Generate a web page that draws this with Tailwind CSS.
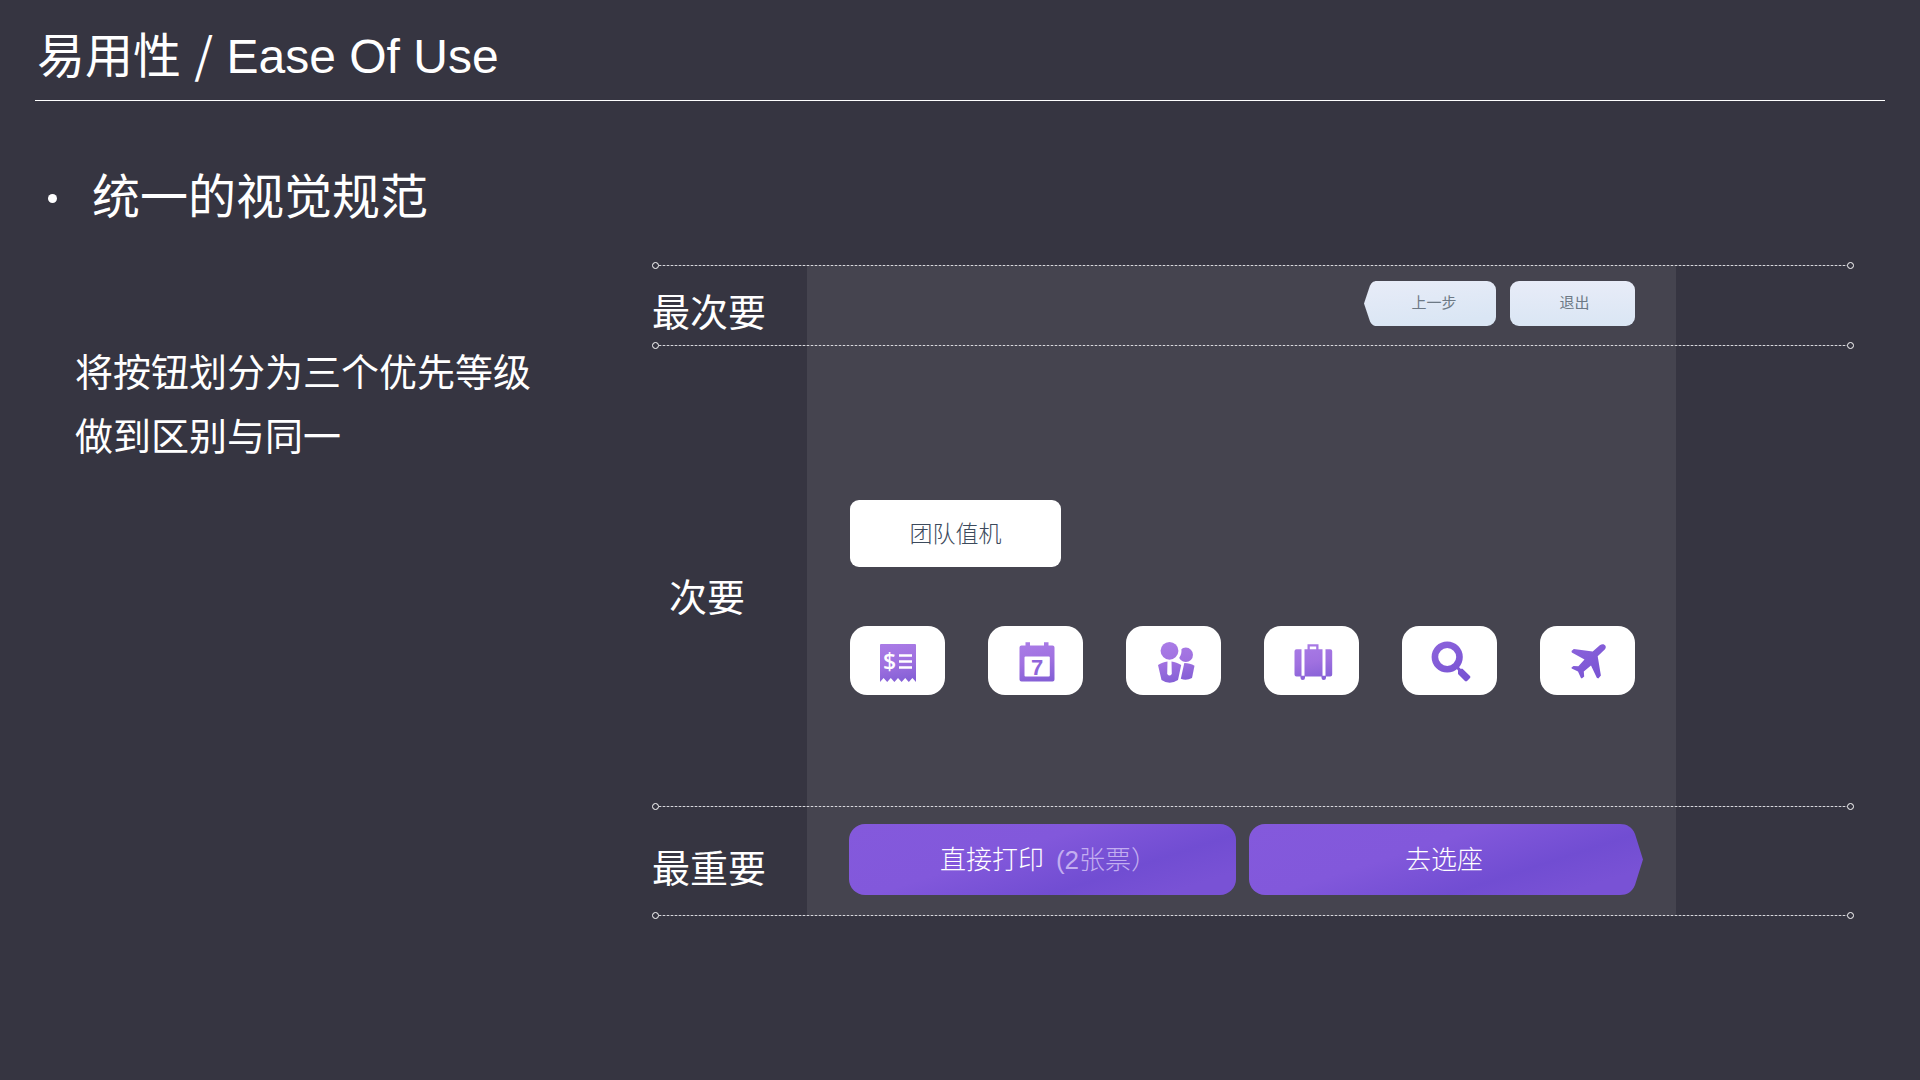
<!DOCTYPE html>
<html lang="zh-CN">

<head>
  <meta charset="UTF-8">
  <meta name="viewport" content="width=device-width, initial-scale=1.0">
  <title>易用性 / Ease Of Use</title>
  <script src="https://cdn.jsdelivr.net/npm/@tailwindcss/browser@4"></script>
</head>

<body class="min-h-screen bg-[#363541] text-white font-['Liberation_Sans','Noto_Sans_CJK_SC',sans-serif]">
  <header class="mx-[35px] h-[101px] border-b border-white pt-4 pl-[2px]">
    <h1 class="text-[48px] leading-[72px]">易用性 <span class="font-['Noto_Sans_CJK_SC',sans-serif]">/</span> Ease Of Use</h1>
  </header>

  <main class="flex pr-[66px]">
    <!-- Explanation -->
    <div class="w-[652px] shrink-0 pt-[61px] pl-12">
      <h2 class="flex items-center gap-[35px] text-[48px] leading-[72px]">
        <span class="size-[9px] rounded-full bg-white"></span>统一的视觉规范
      </h2>
      <p class="mt-[107px] pl-[27px] text-[38px] leading-[64px]">将按钮划分为三个优先等级<br>做到区别与同一</p>
    </div>

    <!-- Button levels -->
    <div class="min-w-0 flex-1 pt-[164px]">
      <div class="relative z-10 -mt-[3px] -mb-1 flex h-[7px] items-center">
        <span class="size-[7px] rounded-full border border-white"></span>
        <span class="h-px flex-1 bg-[repeating-linear-gradient(90deg,#d8d8dc_0_2px,#6a6974_2px_4px)]"></span>
        <span class="size-[7px] rounded-full border border-white"></span>
      </div>

      <section class="grid grid-cols-[155px_1fr_178px]">
        <h3 class="self-center pt-4 pr-[45px] text-center text-[38px] leading-[56px] whitespace-nowrap">最次要</h3>
        <div class="flex justify-end gap-[14px] bg-[#45444f] pt-4 pr-[41px] pb-[19px]">
          <button type="button" class="relative h-[45px] w-[132px] text-[15px] text-[#6d7985]">
            <svg class="absolute inset-0 size-full" viewBox="0 0 132 45" preserveAspectRatio="none" aria-hidden="true">
              <defs>
                <linearGradient id="pale" x1="0" y1="0" x2="0.3" y2="1">
                  <stop offset="0" stop-color="#e8ecf8" />
                  <stop offset="1" stop-color="#dae6f4" />
                </linearGradient>
              </defs>
              <path fill="url(#pale)" d="M13 0H123a9 9 0 0 1 9 9V36a9 9 0 0 1-9 9H13c-4 0-6-2-7.500-6L0 22.500 5.500 6C7 2 9 0 13 0Z" />
            </svg>
            <span class="relative pl-2">上一步</span>
          </button>
          <button type="button" class="h-[45px] w-[125px] rounded-[9px] bg-linear-to-b from-[#e8ecf8] to-[#dae6f4] pl-1 text-[15px] text-[#6d7985]">退出</button>
        </div>
      </section>

      <div class="relative z-10 -mt-[3px] -mb-1 flex h-[7px] items-center">
        <span class="size-[7px] rounded-full border border-white"></span>
        <span class="h-px flex-1 bg-[repeating-linear-gradient(90deg,#d8d8dc_0_2px,#6a6974_2px_4px)]"></span>
        <span class="size-[7px] rounded-full border border-white"></span>
      </div>

      <section class="grid grid-cols-[155px_1fr_178px]">
        <h3 class="self-center pt-11 pr-[45px] text-center text-[38px] leading-[56px]">次要</h3>
        <div class="bg-[#45444f] pt-[155px] pr-[41px] pb-[111px] pl-[43px]">
          <button type="button" class="block h-[67px] w-[211px] rounded-[9px] bg-white pt-[2px] text-[23px] font-light text-[#3c4a5c]">团队值机</button>
          <div class="mt-[59px] flex justify-between">
            <button type="button" aria-label="行程单" class="grid h-[69px] w-[95px] place-items-center rounded-[17px] bg-white">
              <svg class="size-11" viewBox="0 0 44 44" aria-hidden="true">
                <defs>
                  <linearGradient id="violet" gradientUnits="userSpaceOnUse" x1="18" y1="4" x2="26" y2="42">
                    <stop offset="0" stop-color="#a97be6" />
                    <stop offset="0.5" stop-color="#a071e0" />
                    <stop offset="1" stop-color="#8560d6" />
                  </linearGradient>
                </defs>
                <path fill="url(#violet)" d="M5 5H39a1 1 0 0 1 1 1V43L36.400 39 32.800 43 29.200 39 25.600 43 22 39 18.400 43 14.800 39 11.200 43 7.600 39 4 43V6a1 1 0 0 1 1-1Z" />
                <text x="7" y="31" fill="#fff" font-size="23" class="font-['Open_Sans',sans-serif] font-semibold">$</text>
                <path stroke="#fff" stroke-width="2.500" d="M23 16.500H36M23 22.500H36M23 28.500H36" />
              </svg>
            </button>
            <button type="button" aria-label="日期" class="grid h-[69px] w-[95px] place-items-center rounded-[17px] bg-white">
              <svg class="size-11" viewBox="0 0 44 44" aria-hidden="true">
                <path fill="url(#violet)" fill-rule="evenodd" d="M7.500 6.500H11.500V3.300H16V6.500H30V3.300H34.500V6.500H38.500a2 2 0 0 1 2 2V40.500a2 2 0 0 1-2 2H7.500a2 2 0 0 1-2-2V8.500a2 2 0 0 1 2-2ZM11.500 17.500a1 1 0 0 0-1 1V36.500a1 1 0 0 0 1 1H34.800a1 1 0 0 0 1-1V18.500a1 1 0 0 0-1-1Z" />
                <text x="17" y="36" fill="#8f65da" font-size="22" class="font-['Liberation_Sans',sans-serif] font-bold">7</text>
              </svg>
            </button>
            <button type="button" aria-label="同行人" class="grid h-[69px] w-[95px] place-items-center rounded-[17px] bg-white">
              <svg class="size-11" viewBox="0 0 44 44" aria-hidden="true">
                <circle cx="33.800" cy="15.800" r="7.200" fill="url(#violet)" />
                <circle cx="17.500" cy="11.800" r="12" fill="#fff" />
                <circle cx="17.500" cy="11.800" r="8.900" fill="url(#violet)" />
                <path fill="url(#violet)" d="M6 26C9 24 12 22.900 15.500 22.500L15.200 35Q17.500 38 19.800 35L19.500 22.500C23 22.900 26 24 29.200 26L26 41Q17.500 46.500 9.500 41Z" />
                <path fill="url(#violet)" d="M32.300 24C36 24 39.500 25 42.500 26.800L40 39Q34.500 42 28.800 39.800Z" />
              </svg>
            </button>
            <button type="button" aria-label="行李" class="grid h-[69px] w-[95px] place-items-center rounded-[17px] bg-white">
              <svg class="size-11" viewBox="0 0 44 44" aria-hidden="true">
                <path fill="url(#violet)" fill-rule="evenodd" d="M6.500 10.200H11.500V37.500H6.500a2 2 0 0 1-2-2V12.200a2 2 0 0 1 2-2ZM14.500 10.200H17.500V5.200H28.500V10.200H32.500V37.500H14.500ZM19.800 7.500V10.200H26.200V7.500ZM35.500 10.200H40.200a2 2 0 0 1 2 2V35.500a2 2 0 0 1-2 2H35.500Z" />
                <path fill="url(#violet)" d="M10.500 36.800H15V38.800a2.200 2.200 0 0 1-4.500 0ZM31.500 36.800H36V38.800a2.200 2.200 0 0 1-4.500 0Z" />
              </svg>
            </button>
            <button type="button" aria-label="查询" class="grid h-[69px] w-[95px] place-items-center rounded-[17px] bg-white">
              <svg class="size-11" viewBox="0 0 44 44" aria-hidden="true">
                <defs>
                  <linearGradient id="indigo" gradientUnits="userSpaceOnUse" x1="8" y1="4" x2="32" y2="42">
                    <stop offset="0" stop-color="#8b63db" />
                    <stop offset="1" stop-color="#7853d3" />
                  </linearGradient>
                </defs>
                <circle cx="19.200" cy="18" r="12.300" fill="none" stroke="url(#indigo)" stroke-width="6.600" />
                <path fill="url(#indigo)" d="M28.500 29.500 30.500 27.500 32.500 29.800H34.500L42 37a1.500 1.500 0 0 1 0 2L39 42a1.500 1.500 0 0 1-2 0L30 35V31.500Z" />
              </svg>
            </button>
            <button type="button" aria-label="航班" class="grid h-[69px] w-[95px] place-items-center rounded-[17px] bg-white">
              <svg class="size-11" viewBox="0 0 44 44" aria-hidden="true">
                <path fill="url(#indigo)" d="M26.700 12.500 33.800 6.300C37.500 3.500 41.500 6.800 39 10.300L31.700 17.300 34.900 36.500 32.300 39.500 30.800 38.800 25 26.500 17.800 32.500 18.200 37.500 15.800 39.500 14.800 38.700 12 32.500 5.700 29.500 5.500 28.400 7.500 26.900 12.400 27.300 18.500 20.500 5.800 13.500 5.500 12 7.800 9.900Z" />
              </svg>
            </button>
          </div>
        </div>
      </section>

      <div class="relative z-10 -mt-[3px] -mb-1 flex h-[7px] items-center">
        <span class="size-[7px] rounded-full border border-white"></span>
        <span class="h-px flex-1 bg-[repeating-linear-gradient(90deg,#d8d8dc_0_2px,#6a6974_2px_4px)]"></span>
        <span class="size-[7px] rounded-full border border-white"></span>
      </div>

      <section class="grid grid-cols-[155px_1fr_178px]">
        <h3 class="self-center pt-4 pr-[45px] text-center text-[38px] leading-[56px] whitespace-nowrap">最重要</h3>
        <div class="flex gap-[13px] bg-[#45444f] pt-[18px] pr-[33px] pb-5 pl-[42px]">
          <button type="button" class="h-[71px] flex-[387] rounded-[16px] bg-[linear-gradient(162deg,#8459dc_0%,#8258db_40%,#714dd2_69%,#7952d5_88%)] pt-[2px] text-[26px] font-light">
            <span class="pl-3">直接打印<span class="ml-3 text-[#c3aef0]">(2张票）</span></span>
          </button>
          <button type="button" class="relative h-[71px] flex-[394] pt-[2px] text-[26px] font-light">
            <svg class="absolute inset-0 size-full" viewBox="0 0 394 71" preserveAspectRatio="none" aria-hidden="true">
              <defs>
                <linearGradient id="go" gradientUnits="userSpaceOnUse" x1="0" y1="0" x2="58" y2="178">
                  <stop offset="0" stop-color="#8459dc" />
                  <stop offset="0.400" stop-color="#8258db" />
                  <stop offset="0.690" stop-color="#714dd2" />
                  <stop offset="0.880" stop-color="#7952d5" />
                </linearGradient>
              </defs>
              <path fill="url(#go)" d="M16 0H371c7 0 12 3 15 10L394 35.500 386 61c-3 7-8 10-15 10H16A16 16 0 0 1 0 55V16A16 16 0 0 1 16 0Z" />
            </svg>
            <span class="relative pr-1">去选座</span>
          </button>
        </div>
      </section>

      <div class="relative z-10 -mt-[3px] -mb-1 flex h-[7px] items-center">
        <span class="size-[7px] rounded-full border border-white"></span>
        <span class="h-px flex-1 bg-[repeating-linear-gradient(90deg,#d8d8dc_0_2px,#6a6974_2px_4px)]"></span>
        <span class="size-[7px] rounded-full border border-white"></span>
      </div>
    </div>
  </main>
</body>

</html>
